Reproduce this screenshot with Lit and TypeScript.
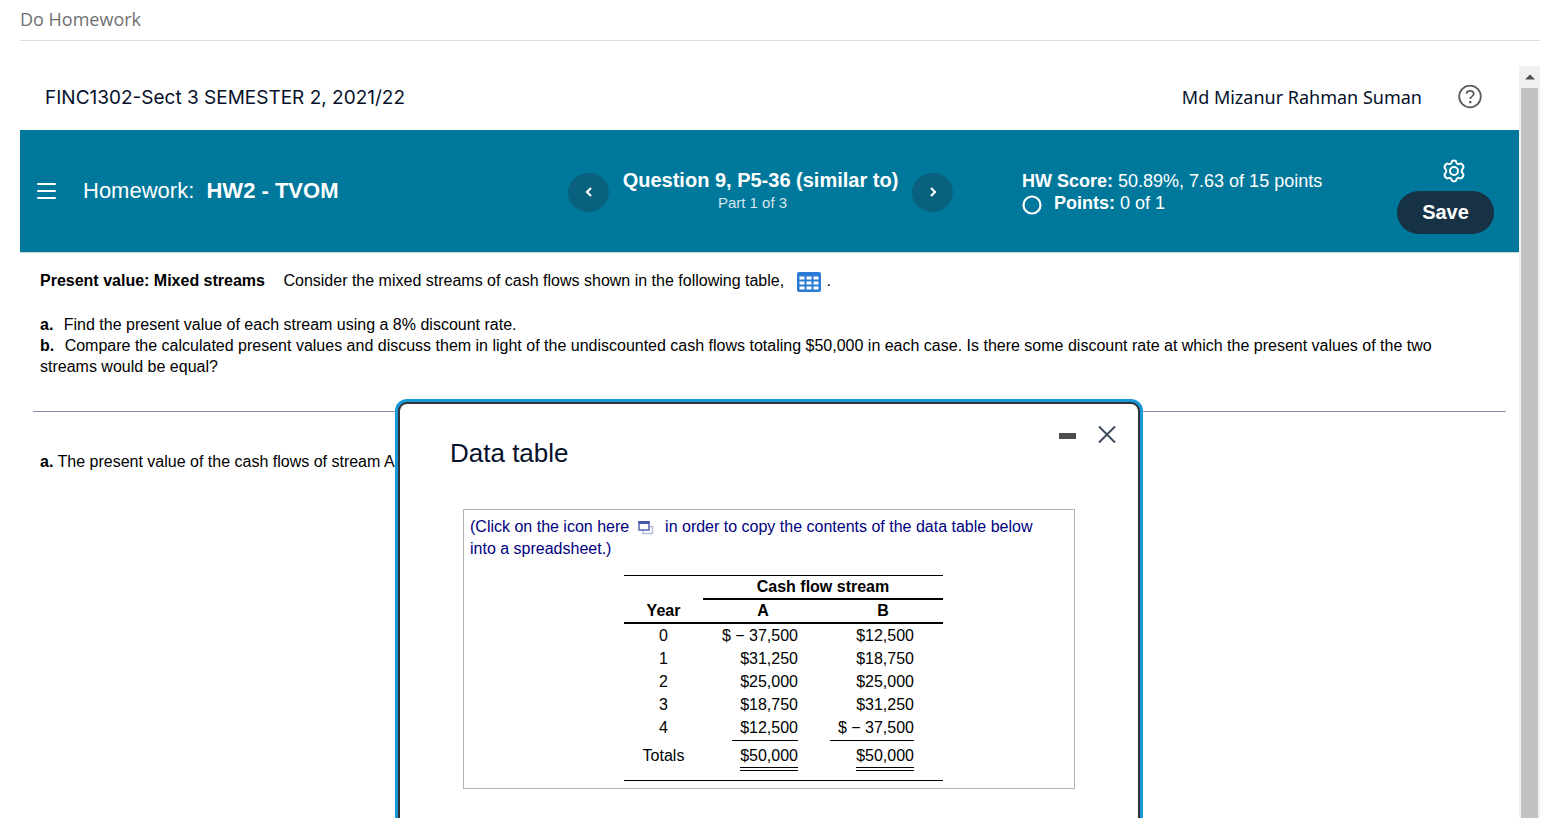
import { LitElement, html, css, svg } from "lit";
import { customElement } from "lit/decorators.js";

interface Row {
  year: string;
  a: string;
  b: string;
}

const ROWS: Row[] = [
  { year: "0", a: "$ − 37,500", b: "$12,500" },
  { year: "1", a: "$31,250", b: "$18,750" },
  { year: "2", a: "$25,000", b: "$25,000" },
  { year: "3", a: "$18,750", b: "$31,250" },
  { year: "4", a: "$12,500", b: "$ − 37,500" },
];

@customElement("data-window")
class DataWindow extends LitElement {
  static styles = css`
    :host {
      display: block;
      box-sizing: border-box;
      background: #fff;
      border: 2px solid #2f3337;
      border-radius: 9px;
      box-shadow: 0 0 0 3px #1a97d5;
      color: #05112a;
      padding: 20px 21px 40px 50px;
    }
    .bar {
      display: flex;
      align-items: flex-start;
      justify-content: space-between;
    }
    h2 {
      margin: 12px 0 0;
      font-size: 26px;
      line-height: 34px;
      font-weight: 400;
    }
    .controls {
      display: flex;
      gap: 20px;
    }
    button {
      border: 0;
      padding: 0;
      background: none;
      width: 20px;
      height: 20px;
      cursor: pointer;
    }
    svg {
      display: block;
    }
    .box {
      margin: 39px 42px 0 13px;
      border: 1px solid #b4b4b4;
      padding: 6px 6px 7px;
    }
    .note {
      margin: 0 0 15px;
      padding-right: 20px;
      color: #00007f;
      font-size: 16px;
      line-height: 22px;
    }
    .copy {
      display: inline-block;
      width: 16px;
      height: 14px;
      margin: 0 7px 0 4px;
      vertical-align: -3px;
    }
    table {
      width: 319px;
      margin: 0 125px 0 auto;
      border-collapse: separate;
      border-spacing: 0;
      table-layout: fixed;
      border-top: 1px solid #000;
      border-bottom: 1px solid #000;
      color: #000;
      font-size: 16px;
      line-height: 22px;
    }
    .year {
      width: 79px;
    }
    th,
    td {
      padding: 0;
      text-align: center;
    }
    th {
      font-weight: 700;
      border-bottom: 2px solid #000;
    }
    .blank {
      border-bottom: 0;
    }
    td {
      line-height: 23px;
      vertical-align: top;
    }
    .num {
      text-align: right;
      padding-right: 25px;
    }
    .num.last {
      padding-right: 29px;
    }
    .sum {
      display: inline-block;
      vertical-align: top;
      padding: 0 0 1px 8px;
      border-bottom: 1px solid #000;
    }
    .total td {
      padding-top: 3px;
      padding-bottom: 9px;
    }
    .double {
      display: inline-block;
      vertical-align: top;
      border-bottom: 4px double #000;
    }
  `;

  render() {
    const last = ROWS.length - 1;
    const cell = (v: string, i: number) =>
      i === last ? html`<span class="sum">${v}</span>` : v;
    return html`
      <div class="bar">
        <h2>Data table</h2>
        <div class="controls">
          <button type="button" aria-label="Minimize">
            <svg width="20" height="20" viewBox="0 0 20 20">
              <rect x="2" y="9" width="17" height="6" fill="#4c4c4c" />
            </svg>
          </button>
          <button type="button" aria-label="Close">
            <svg width="20" height="20" viewBox="0 0 20 20">
              <path d="M2 2.500L18 18.500M18 2.500L2 18.500" stroke="#3d4b5c" stroke-width="2" fill="none" />
            </svg>
          </button>
        </div>
      </div>
      <div class="box">
        <p class="note">
          (Click on the icon here
          <button type="button" class="copy" aria-label="Copy table">
            <svg width="16" height="14" viewBox="0 0 16 14">
              <path d="M5 5.500H14.500V12.500H5Z" fill="#fff" stroke="#b9c0e2" stroke-width="1.500" />
              <path d="M1 1H11V9H1Z" fill="#fff" stroke="#5566b0" stroke-width="1.500" />
              <path d="M0.500 1.500H11.500" stroke="#4656a5" stroke-width="3" />
            </svg>
          </button>
          in order to copy the contents of the data table below into a spreadsheet.)
        </p>
        <table>
          <thead>
            <tr>
              <th class="year blank"></th>
              <th colspan="2" scope="colgroup">Cash flow stream</th>
            </tr>
            <tr>
              <th scope="col">Year</th>
              <th scope="col">A</th>
              <th scope="col">B</th>
            </tr>
          </thead>
          <tbody>
            ${ROWS.map(
              (r, i) => html`<tr>
                <td>${r.year}</td>
                <td class="num">${cell(r.a, i)}</td>
                <td class="num last">${cell(r.b, i)}</td>
              </tr>`
            )}
            <tr class="total">
              <td>Totals</td>
              <td class="num"><span class="double">$50,000</span></td>
              <td class="num last"><span class="double">$50,000</span></td>
            </tr>
          </tbody>
        </table>
      </div>
    `;
  }
}

const chevron = (d: string) => svg`<svg width="10" height="12" viewBox="0 0 10 12">
  <path d=${d} fill="none" stroke="#fff" stroke-width="2.200" />
</svg>`;

@customElement("app-root")
class AppRoot extends LitElement {
  static styles = css`
    :host {
      display: flex;
      flex-direction: column;
      box-sizing: border-box;
      height: 100vh;
      overflow: hidden;
      padding: 0 5px 0 20px;
      background: #fff;
      color: #000;
      font-family: "Liberation Sans", Arial, sans-serif;
      font-size: 16px;
    }
    button {
      border: 0;
      padding: 0;
      background: none;
      color: inherit;
      font-family: inherit;
      cursor: pointer;
    }
    svg {
      display: block;
    }
    p {
      margin: 0;
    }
    .page-title {
      margin: 0 0 25px;
      padding-bottom: 2px;
      border-bottom: 1px solid #dcdcdc;
      font-family: "Open Sans", "Noto Sans", sans-serif;
      font-size: 18px;
      font-weight: 400;
      line-height: 38px;
      color: #6e7072;
    }
    .frame {
      flex: 1;
      min-height: 0;
      display: flex;
    }
    .content {
      position: relative;
      flex: 1;
      min-width: 0;
      overflow: hidden;
    }
    .scroll {
      width: 21px;
      box-sizing: border-box;
      display: flex;
      flex-direction: column;
      align-items: center;
      background: #f1f1f1;
    }
    .scroll-up {
      height: 22px;
      display: flex;
      align-items: center;
    }
    .thumb {
      flex: 1;
      width: 17px;
      background: #c1c1c1;
    }
    .course {
      display: flex;
      align-items: center;
      height: 62px;
      padding: 0 37px 2px 25px;
      color: #05112a;
    }
    .course-name {
      flex: 1;
      font-family: Inter, sans-serif;
      font-size: 19px;
    }
    .user {
      font-family: "Noto Sans", sans-serif;
      font-size: 18px;
      margin-right: 36px;
    }
    .banner {
      display: grid;
      grid-template-columns: 548px 385px 1fr auto;
      align-items: center;
      height: 122px;
      border-bottom: 1px solid #c3d3de;
      background: #00789c;
      color: #fff;
    }
    .hw {
      display: flex;
      align-items: center;
      padding-left: 16px;
    }
    .hw h1 {
      margin: 0 0 0 25px;
      font-size: 22px;
      line-height: 28px;
      font-weight: 400;
      white-space: pre;
    }
    .nav {
      display: flex;
      align-items: center;
      justify-content: space-between;
      padding-top: 2px;
    }
    .round {
      display: grid;
      place-items: center;
      width: 41px;
      height: 39px;
      border-radius: 50%;
      background: #08627e;
    }
    .question {
      padding-bottom: 3px;
      text-align: center;
      font-size: 20px;
      line-height: 24px;
      font-weight: 700;
    }
    .part {
      padding-right: 16px;
      font-size: 15px;
      line-height: 21px;
      font-weight: 400;
      color: #d7e6ec;
    }
    .score {
      padding: 4px 0 0 69px;
      font-size: 18px;
      line-height: 22px;
    }
    .points {
      display: flex;
      gap: 12px;
    }
    .actions {
      display: flex;
      flex-direction: column;
      align-items: center;
      gap: 8px;
      padding: 10px 25px 0 0;
    }
    .gear {
      margin-left: 16px;
    }
    .save {
      width: 97px;
      height: 43px;
      border-radius: 22px;
      background: #173244;
      font-size: 20px;
      font-weight: 700;
    }
    .body {
      padding: 0 13px;
    }
    .prompt {
      padding: 17px 7px 34px;
      border-bottom: 1px solid #8590a5;
      line-height: 21px;
    }
    .parts {
      padding-right: 40px;
    }
    .lead {
      margin-bottom: 22px;
    }
    .tag {
      margin-right: 6px;
    }
    .lead b {
      margin-right: 14px;
    }
    .grid {
      margin: 0 6px 0 8px;
      vertical-align: -6px;
    }
    .answer {
      padding: 39px 7px;
      line-height: 21px;
    }
    data-window {
      position: absolute;
      top: 336px;
      left: 0;
      right: 1px;
      margin: 0 auto;
      width: 742px;
      height: 600px;
    }
  `;

  render() {
    return html`
      <h3 class="page-title">Do Homework</h3>
      <div class="frame">
        <main class="content">
          <header class="course">
            <span class="course-name">FINC1302-Sect 3 SEMESTER 2, 2021/22</span>
            <span class="user">Md Mizanur Rahman Suman</span>
            <button type="button" aria-label="Help">
              <svg width="24" height="24" viewBox="0 0 24 24" fill="none" stroke="#5c5c5c">
                <circle cx="12" cy="11.500" r="10.800" stroke-width="1.800" />
                <path d="M8.500 8.800C8.600 6.700 10 5.800 12 5.800C14.200 5.800 15.700 7 15.700 8.800C15.700 11.500 12.200 11.300 12.200 14.100" stroke-width="1.800" />
                <circle cx="12.200" cy="17.100" r="1.300" fill="#5c5c5c" stroke="none" />
              </svg>
            </button>
          </header>

          <section class="banner">
            <div class="hw">
              <button type="button" aria-label="Menu">
                <svg width="22" height="18" viewBox="0 0 22 18" stroke="#fff" stroke-width="2" stroke-linecap="round">
                  <path d="M2 2H19M2 9H19M2 16H19" />
                </svg>
              </button>
              <h1>Homework:  <b>HW2 - TVOM</b></h1>
            </div>
            <div class="nav">
              <button type="button" class="round" aria-label="Previous question">${chevron("M7 2L3 6L7 10")}</button>
              <div class="question">
                <div>Question 9, P5-36 (similar to)</div>
                <div class="part">Part 1 of 3</div>
              </div>
              <button type="button" class="round" aria-label="Next question">${chevron("M3 2L7 6L3 10")}</button>
            </div>
            <div class="score">
              <div><b>HW Score:</b> 50.89%, 7.63 of 15 points</div>
              <div class="points">
                <svg width="20" height="24" viewBox="0 0 20 24">
                  <circle cx="10" cy="13" r="8.500" fill="none" stroke="#fff" stroke-width="2.200" />
                </svg>
                <span><b>Points:</b> 0 of 1</span>
              </div>
            </div>
            <div class="actions">
              <button type="button" class="gear" aria-label="Settings">
                <svg width="24" height="24" viewBox="0 0 24 24" fill="none" stroke="#fff" stroke-width="2" stroke-linejoin="round">
                  <path d="M9.600 3.200C10 1 14 1 14.400 3.200C14.800 5 16 5.600 17.600 4.800C19.800 3.800 22.600 7.800 20.800 9.600C19.400 11 19.400 13 20.800 14.400C22.600 16.200 19.800 20.200 17.600 19.200C16 18.400 14.800 19 14.400 20.800C14 23 10 23 9.600 20.800C9.200 19 8 18.400 6.400 19.200C4.200 20.200 1.400 16.200 3.200 14.400C4.600 13 4.600 11 3.200 9.600C1.400 7.800 4.200 3.800 6.400 4.800C8 5.600 9.200 5 9.600 3.200Z" />
                  <circle cx="12" cy="12" r="4" />
                </svg>
              </button>
              <button type="button" class="save">Save</button>
            </div>
          </section>

          <section class="body">
            <div class="prompt">
              <p class="lead">
                <b>Present value: Mixed streams</b>
                Consider the mixed streams of cash flows shown in the following table,
                <button type="button" class="grid" aria-label="Data table">
                  <svg width="24" height="20" viewBox="0 0 24 20">
                    <rect width="24" height="20" rx="2" fill="#2b7bd6" />
                    <path d="M2.500 4.500h5v3h-5zM9.500 4.500h5v3h-5zM16.500 4.500h5v3h-5zM2.500 9.500h5v3h-5zM9.500 9.500h5v3h-5zM16.500 9.500h5v3h-5zM2.500 14.500h5v3h-5zM9.500 14.500h5v3h-5zM16.500 14.500h5v3h-5z" fill="#fff" />
                  </svg>
                </button>.
              </p>
              <div class="parts">
                <p><b class="tag">a.</b> Find the present value of each stream using a 8% discount rate.</p>
                <p>
                  <b class="tag">b.</b> Compare the calculated present values and discuss them in light of the
                  undiscounted cash flows totaling $50,000 in each case. Is there some discount rate at
                  which the present values of the two streams would be equal?
                </p>
              </div>
            </div>
            <p class="answer"><b>a.</b> The present value of the cash flows of stream A</p>
          </section>

          <data-window role="dialog" aria-label="Data table"></data-window>
        </main>
        <div class="scroll" aria-hidden="true">
          <div class="scroll-up">
            <svg width="10" height="6" viewBox="0 0 10 6"><path d="M0 5.500L5 0.500L10 5.500Z" fill="#505050" /></svg>
          </div>
          <div class="thumb"></div>
        </div>
      </div>
    `;
  }
}
